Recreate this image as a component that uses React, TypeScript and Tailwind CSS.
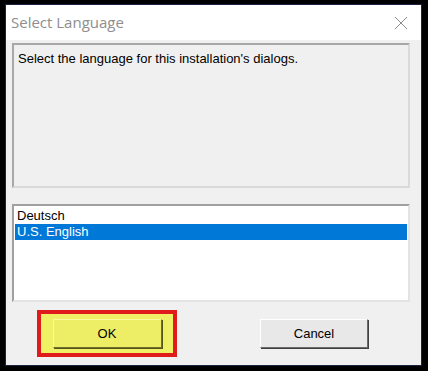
import React from 'react';

const sans = { fontFamily: '"Liberation Sans", Arial, sans-serif' };

export default function App() {
  return (
    <div className="w-[428px] h-[371px] bg-black pt-[4px] pl-[5px]">
      <div className="w-[417px] h-[362px] border border-[#1c2340] flex flex-col bg-[#f0f0f0]">
        {/* title bar */}
        <div className="h-[35px] bg-white flex items-center justify-between pl-[5px] pr-[13px] shrink-0">
          <span className="text-[15px] text-[#8e8e8e]" style={{ fontFamily: '"Open Sans", "Noto Sans", sans-serif' }}>
            Select Language
          </span>
          <svg width="14" height="14" viewBox="0 0 14 14">
            <path d="M1 1 L13 13 M13 1 L1 13" stroke="#8a8a8a" strokeWidth="1" fill="none" />
          </svg>
        </div>

        <div className="flex flex-col pl-[6px] pt-[3px]" style={sans}>
          {/* message panel */}
          <div className="w-[398px] h-[145px] border-t-2 border-l-2 border-[#a8a8a8] border-b-2 border-r-2 border-b-[#dadada] border-r-[#dadada] bg-[#f0f0f0] px-[4px] pt-[4px]">
            <div className="text-[13px] text-black">Select the language for this installation's dialogs.</div>
          </div>

          {/* list box */}
          <div className="mt-[16px] w-[398px] h-[98px] border-t-2 border-l-2 border-[#a0a0a0] border-b-2 border-r-2 border-b-[#e3e3e3] border-r-[#e3e3e3] bg-white pt-[2px] pl-[1px] pr-[1px]">
            <div className="h-[16px] leading-[16px] text-[13px] text-black pl-[2px]">Deutsch</div>
            <div className="h-[16px] leading-[16px] text-[13px] text-white bg-[#0078d7] pl-[2px]">U.S. English</div>
          </div>

          {/* buttons */}
          <div className="flex items-center mt-[8px]">
            <div className="ml-[25px] w-[140px] h-[47px] border-[4px] border-[#e01b1b] bg-[#f0f066] flex items-center justify-center">
              <button className="w-[109px] h-[29px] bg-[#eeee66] border border-t-[#fbfba0] border-l-[#fbfba0] border-b-[#70702a] border-r-[#70702a] text-[13px] text-black shadow-[1px_1px_0_#55551f]">
                OK
              </button>
            </div>
            <button className="ml-[83px] w-[108px] h-[29px] bg-[#e8e8e8] border border-t-white border-l-white border-b-[#6a6a6a] border-r-[#6a6a6a] text-[13px] text-black shadow-[1px_1px_0_#404040]">
              Cancel
            </button>
          </div>
        </div>
      </div>
    </div>
  );
}
